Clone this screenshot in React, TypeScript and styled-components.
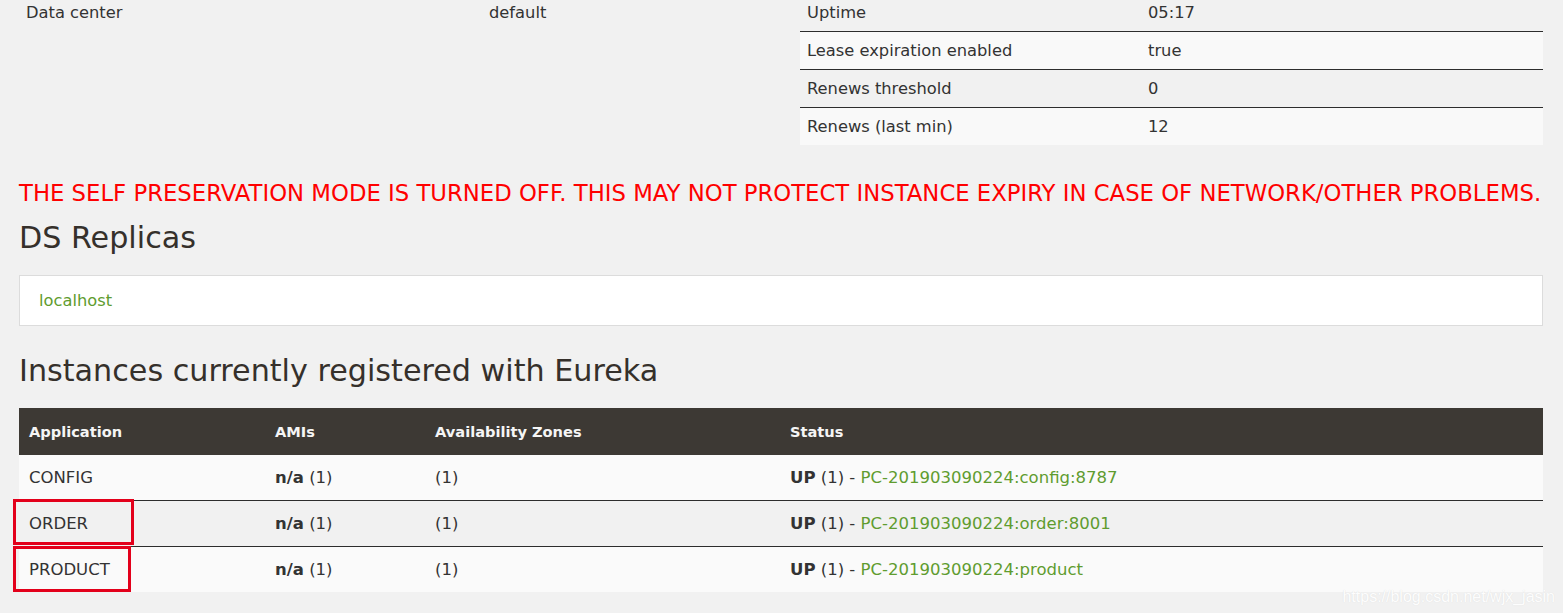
import styled, { createGlobalStyle } from "styled-components";

const GlobalStyle = createGlobalStyle`
  html, body {
    margin: 0;
    padding: 0;
    background: #f1f1f1;
  }
  body {
    font-family: "DejaVu Sans", "Open Sans", sans-serif;
    color: #333;
    overflow: hidden;
  }
`;

const Page = styled.div`
  position: relative;
  height: 613px;
  padding: 0 20px 0 19px;
  overflow: hidden;
`;

const InfoGrid = styled.div`
  display: grid;
  grid-template-columns: 1fr 743px;
  column-gap: 20px;
  margin-top: -6px;
`;

const InfoTable = styled.table<{ $keyWidth: number }>`
  width: 100%;
  border-collapse: collapse;
  font-size: 16.3px;
  align-self: start;

  td {
    height: 37px;
    padding: 0 7px;
    vertical-align: middle;
  }
  td:first-child {
    width: ${(p) => p.$keyWidth}px;
  }
`;

const InfoRow = styled.tr<{ $light?: boolean; $ruled?: boolean }>`
  background: ${(p) => (p.$light ? "#f9f9f9" : "transparent")};
  border-top: ${(p) => (p.$ruled ? "1px solid #2d2d2d" : "none")};
`;

const Warning = styled.h4`
  margin: 35px 0 0;
  color: #ff0000;
  font-size: 22.75px;
  font-weight: normal;
  line-height: 26px;
  white-space: nowrap;
`;

const Heading = styled.h1`
  margin: 15px 0 0;
  font-size: 30.2px;
  font-weight: normal;
  line-height: 34px;
  color: #35302b;
`;

const ReplicaBox = styled.div`
  margin-top: 20px;
  background: #fff;
  border: 1px solid #dcdcdc;
  height: 49px;
  padding: 0 19px;
  display: flex;
  align-items: center;
  font-size: 16.3px;
`;

const Link = styled.a`
  color: #5f9c2f;
  text-decoration: none;
`;

const InstancesHeading = styled(Heading)`
  margin-top: 28px;
`;

const InstanceTable = styled.table`
  width: 100%;
  margin-top: 20px;
  border-collapse: collapse;
  font-size: 16.5px;

  th {
    background: #3d3934;
    color: #f5f5f5;
    text-align: left;
    font-size: 14.6px;
    font-weight: bold;
    height: 47px;
    padding: 0 10px;
  }
  td {
    height: 45px;
    padding: 0 10px;
    vertical-align: middle;
  }
`;

const InstanceRow = styled.tr<{ $light?: boolean; $ruled?: boolean }>`
  background: ${(p) => (p.$light ? "#fafafa" : "#f1f1f1")};
  border-top: ${(p) => (p.$ruled ? "1px solid #2d2d2d" : "none")};
`;

const AppCell = styled.td`
  position: relative;
`;

const Marker = styled.span<{ $w: number; $top: number; $h: number }>`
  position: absolute;
  left: -6px;
  top: ${(p) => p.$top}px;
  width: ${(p) => p.$w}px;
  height: ${(p) => p.$h}px;
  border: 3px solid #e3001b;
  box-sizing: border-box;
  pointer-events: none;
`;

const Watermark = styled.div`
  position: absolute;
  right: 8px;
  bottom: 7px;
  font-family: "Liberation Sans", Arial, sans-serif;
  font-size: 16px;
  color: #fdfdfd;
  text-shadow: 0 0 1px #dadada;
`;

const rows = [
  { app: "CONFIG", id: "PC-201903090224:config:8787" },
  { app: "ORDER", id: "PC-201903090224:order:8001", mark: { w: 121, top: -2, h: 46 } },
  { app: "PRODUCT", id: "PC-201903090224:product", mark: { w: 118, top: -1, h: 46 } },
];

export default function App() {
  return (
    <>
      <GlobalStyle />
      <Page>
        <InfoGrid>
          <InfoTable $keyWidth={449}>
            <tbody>
              <InfoRow>
                <td>Data center</td>
                <td>default</td>
              </InfoRow>
            </tbody>
          </InfoTable>
          <InfoTable $keyWidth={327}>
            <tbody>
              <InfoRow>
                <td>Uptime</td>
                <td>05:17</td>
              </InfoRow>
              <InfoRow $light $ruled>
                <td>Lease expiration enabled</td>
                <td>true</td>
              </InfoRow>
              <InfoRow $ruled>
                <td>Renews threshold</td>
                <td>0</td>
              </InfoRow>
              <InfoRow $light $ruled>
                <td>Renews (last min)</td>
                <td>12</td>
              </InfoRow>
            </tbody>
          </InfoTable>
        </InfoGrid>

        <Warning>
          THE SELF PRESERVATION MODE IS TURNED OFF. THIS MAY NOT PROTECT INSTANCE EXPIRY IN CASE OF
          NETWORK/OTHER PROBLEMS.
        </Warning>

        <Heading>DS Replicas</Heading>
        <ReplicaBox>
          <Link href="#">localhost</Link>
        </ReplicaBox>

        <InstancesHeading>Instances currently registered with Eureka</InstancesHeading>
        <InstanceTable>
          <thead>
            <tr>
              <th style={{ width: 226 }}>Application</th>
              <th style={{ width: 140 }}>AMIs</th>
              <th style={{ width: 335 }}>Availability Zones</th>
              <th>Status</th>
            </tr>
          </thead>
          <tbody>
            {rows.map((r, i) => (
              <InstanceRow key={r.app} $light={i % 2 === 0} $ruled={i > 0}>
                <AppCell>
                  {r.app}
                  {r.mark && <Marker $w={r.mark.w} $top={r.mark.top} $h={r.mark.h} />}
                </AppCell>
                <td>
                  <b>n/a</b> (1)
                </td>
                <td>(1)</td>
                <td>
                  <b>UP</b> (1) - <Link href="#">{r.id}</Link>
                </td>
              </InstanceRow>
            ))}
          </tbody>
        </InstanceTable>
        <Watermark>https://blog.csdn.net/wjx_jasin</Watermark>
      </Page>
    </>
  );
}
